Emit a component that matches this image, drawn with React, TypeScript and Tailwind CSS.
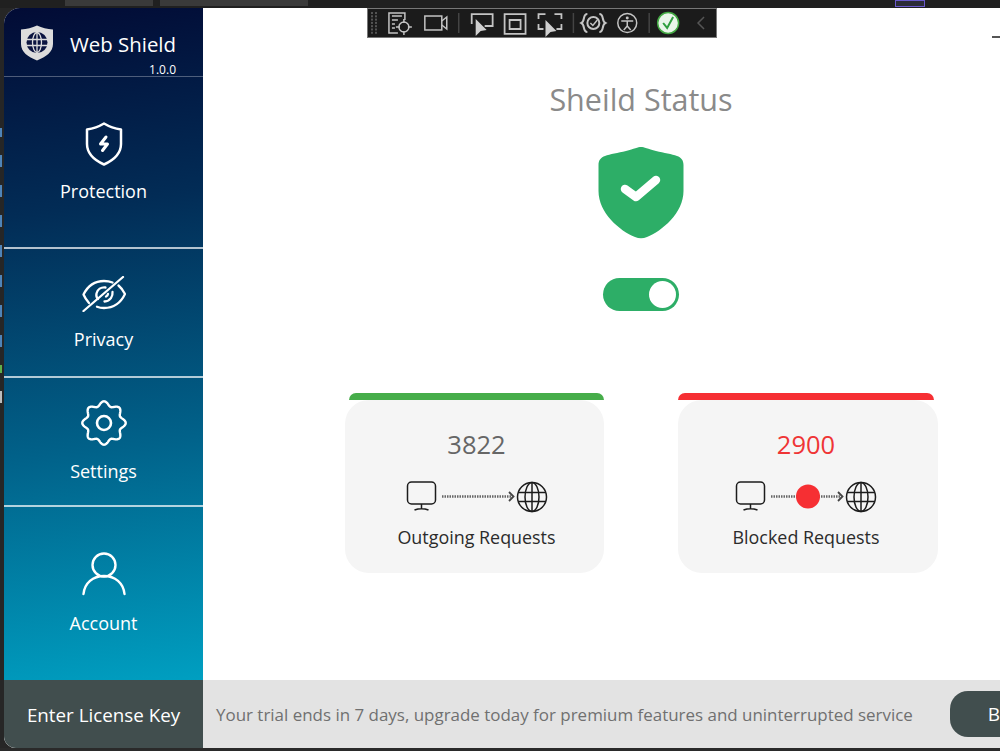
import React from 'react';

const FONT = { fontFamily: '"Open Sans", "Noto Sans", sans-serif' };

// wavy 8 lobe outline for the settings cog
const cogPath = (() => {
  const pts: string[] = [];
  for (let i = 0; i < 240; i++) {
    const a = (i / 240) * Math.PI * 2;
    const r = 19.5 + 2.2 * Math.cos(8 * a);
    pts.push(`${(24 + r * Math.sin(a)).toFixed(2)} ${(24 - r * Math.cos(a)).toFixed(2)}`);
  }
  return 'M' + pts.join('L') + 'Z';
})();

const Logo = () => (
  <svg width="34" height="36" viewBox="0 0 34 36">
    <path d="M17 .5C22 3 27 4 33 4.500V19C33 27 26 32 17 35.500C8 32 1 27 1 19V4.500C7 4 12 3 17 .5Z" fill="#dcdcdc" />
    <circle cx="17" cy="17.500" r="10.500" fill="#0b1440" />
    <g fill="none" stroke="#dcdcdc" strokeWidth="1.300">
      <ellipse cx="17" cy="17.500" rx="4.500" ry="10" />
      <path d="M7 14.500H27M7 20.500H27M17 7.500V27.500" />
    </g>
  </svg>
);

const BoltShield = () => (
  <svg width="38" height="44" viewBox="0 0 38 44" fill="none" stroke="white" strokeWidth="2.500" strokeLinejoin="round" strokeLinecap="round">
    <path d="M19 1.500C24 4.500 29 6.500 36 7.500V22C36 31 29 38 19 42.500C9 38 2 31 2 22V7.500C9 6.500 14 4.500 19 1.500Z" />
    <path d="M21 15L15.500 22H22.500L17.500 28.500" strokeWidth="3" />
  </svg>
);

const EyeOff = () => (
  <svg width="44" height="36" viewBox="0 0 44 36" fill="none" stroke="white" strokeWidth="2.300" strokeLinecap="round" strokeLinejoin="round">
    <path d="M7 27C4.500 24 2.500 21 1.500 18.500C6 9.500 13 5 22 5C25 5 28 5.500 30.500 6.500" />
    <path d="M36.500 9.500C39.500 12 41.500 15 43 18C38.500 27.500 31 32 22 32C19.500 32 17 31.500 15 30.700" />
    <path d="M16 23C14.500 21.500 14 19.500 14.500 17.500C15.500 13.500 19 11 23.500 11.500" />
    <path d="M30.500 16C31 20 28.500 25 22.500 25.500" />
    <path d="M24 20.500C25 20 25.800 19 26 18" />
    <path d="M1.500 35L41 1" />
  </svg>
);

const Cog = () => (
  <svg width="48" height="48" viewBox="0 0 48 48" fill="none" stroke="white" strokeWidth="2.400">
    <path d={cogPath} strokeLinejoin="round" />
    <circle cx="24" cy="24" r="7" strokeWidth="2.600" />
  </svg>
);

const User = () => (
  <svg width="44" height="44" viewBox="0 0 44 44" fill="none" stroke="white" strokeWidth="2.400" strokeLinecap="round">
    <circle cx="22" cy="13" r="11.500" />
    <path d="M1.500 42C2.500 31 11 24 22 24C33 24 41.500 31 42.500 42" />
  </svg>
);

const FlowGraphic = ({ blocked }: { blocked?: boolean }) => (
  <svg width="142" height="32" viewBox="0 0 142 32" fill="none">
    {/* monitor */}
    <rect x="1.500" y="1" width="28" height="22" rx="4" stroke="#1c1c1c" strokeWidth="1.500" />
    <path d="M15.500 23V28M8.500 29C12.500 27.500 18.500 27.500 22.500 29" stroke="#1c1c1c" strokeWidth="1.500" />
    {/* dotted line + arrow */}
    <path d="M36 15.500H106" stroke="#666" strokeWidth="2.400" strokeDasharray="1.500 1" />
    <path d="M103 11L107.500 15.500L103 20" stroke="#444" strokeWidth="1.800" />
    {blocked && <circle cx="73" cy="15.500" r="12" fill="#f62f33" />}
    {/* globe */}
    <circle cx="126" cy="16" r="14.500" stroke="#1c1c1c" strokeWidth="1.500" />
    <ellipse cx="126" cy="16" rx="7" ry="14.500" stroke="#1c1c1c" strokeWidth="1.500" />
    <path d="M126 1.500V30.500M112 11.500H140M112 20.500H140" stroke="#1c1c1c" strokeWidth="1.500" />
  </svg>
);

const NavItem = ({ icon, label, className }: { icon: React.ReactNode; label: string; className: string }) => (
  <div className={`flex flex-col items-center text-white ${className}`}>
    {icon}
    <span className="text-[18px] leading-6">{label}</span>
  </div>
);

const StatCard = ({ value, label, blocked }: { value: string; label: string; blocked?: boolean }) => (
  <div className={blocked ? 'w-[260px] flex flex-col' : 'w-[259px] flex flex-col'}>
    <div className={blocked ? 'h-[7px] w-[256px] rounded-t-[8px] bg-[#f62f33]' : 'h-[7px] w-[255px] ml-[4px] rounded-t-[8px] bg-[#46ad4a]'} />
    <div className={blocked ? 'h-[173px] rounded-[24px] bg-[#f5f5f5] flex flex-col items-center pt-[28px] pr-[4px]' : 'h-[173px] rounded-[24px] bg-[#f5f5f5] flex flex-col items-center pt-[28px] pl-[4px]'}>
      <span className={blocked ? 'text-[25.500px] leading-8 text-[#ef3535]' : 'text-[25.500px] leading-8 text-[#666666]'}>{value}</span>
      <div className="mt-[21px]">
        <FlowGraphic blocked={blocked} />
      </div>
      <span className="mt-[12px] text-[17.900px] leading-6 text-[#2b2b2b]">{label}</span>
    </div>
  </div>
);

const Toolbar = () => (
  <div className="absolute left-[363px] top-0 w-[350px] h-[30px] bg-[#1b1b1b] border border-[#777777] flex items-center">
    <svg width="348" height="28" viewBox="0 0 349 28" fill="none" stroke="#c4c4c4" strokeWidth="1.500">
      <g fill="#555" stroke="none">
        {[0, 1, 2, 3, 4, 5, 6].map((i) => (
          <React.Fragment key={i}>
            <rect x="3" y={3 + i * 3.300} width="2" height="2" />
            <rect x="7" y={3 + i * 3.300} width="2" height="2" />
          </React.Fragment>
        ))}
      </g>
      {/* doc + target */}
      <path d="M30 24H21V4H37V11M24 7H34M24 11H30M24 15H27M24 19H27" />
      <circle cx="36" cy="18" r="5" />
      <path d="M36 10V14M36 22V26M28 18H32M40 18H44" />
      {/* video */}
      <rect x="57" y="7" width="17" height="14" />
      <path d="M74 12L79 8V20L74 16" />
      <path d="M91 4V24" stroke="#444" />
      {/* selection cursor */}
      <path d="M104 15V5H125V17H117" strokeWidth="1.800" />
      <path d="M108 10L108 27L113 22L119 21Z" fill="#d0d0d0" stroke="none" />
      <path d="M137 5H158V25H137Z" strokeWidth="1.800" />
      <path d="M142 11H153V20H142Z" strokeWidth="1.800" />
      {/* dashed selection */}
      <path d="M171 10V5H178M187 5H194V10M171 15V20H176M194 15V20H189" strokeWidth="1.800" />
      <path d="M178 11L178 28L183 23L189 22Z" fill="#d0d0d0" stroke="none" />
      <path d="M206 4V24" stroke="#444" />
      {/* braces check */}
      <path d="M220 5C215 5 218 12 214 14C218 16 215 23 220 23M232 5C237 5 234 12 238 14C234 16 237 23 232 23" strokeWidth="2" />
      <circle cx="226" cy="14" r="6" strokeWidth="2" />
      <path d="M223 14L225.500 16.500L230 11" />
      {/* accessibility */}
      <circle cx="260" cy="14" r="9.500" />
      <circle cx="260" cy="9" r="1.500" fill="#c4c4c4" stroke="none" />
      <path d="M254 12H266M260 12V17M260 17L256.500 21M260 17L263.500 21" />
      <path d="M282 4V24" stroke="#444" />
      {/* check */}
      <circle cx="301" cy="14" r="10.500" fill="#eaf5ea" stroke="#44a944" strokeWidth="1.500" />
      <path d="M296 14L300 19L306 8" stroke="#2f9e3f" strokeWidth="2" />
      <path d="M337 8L331 14L337 20" stroke="#555" />
    </svg>
  </div>
);

export default function App() {
  return (
    <div className="w-[1000px] h-[751px] overflow-hidden bg-[#262626] flex flex-col" style={FONT}>
      {/* host window strip on top */}
      <div className="h-[8px] shrink-0 bg-[#202020] flex items-start">
        <div className="ml-[65px] w-[88px] h-[6px] bg-[#3a3a3a]" />
        <div className="ml-[7px] w-[148px] h-[6px] bg-[#3a3a3a]" />
        <div className="ml-[587px] w-[30px] h-[7px] border border-[#6a5acd] bg-[#2c2c38]" />
      </div>

      <div className="flex flex-1 min-h-0">
        <div className="w-[4px] shrink-0 flex flex-col items-start gap-[18px] pt-[120px]">
          <div className="w-[2px] h-[9px] bg-[#4f84b8]" />
          <div className="w-[2px] h-[12px] bg-[#4f84b8]" />
          <div className="w-[2px] h-[12px] bg-[#4f84b8]" />
          <div className="w-[2px] h-[12px] bg-[#4f84b8]" />
          <div className="w-[2px] h-[12px] bg-[#4f84b8]" />
          <div className="w-[2px] h-[12px] bg-[#4f84b8]" />
          <div className="w-[2px] h-[12px] bg-[#4f84b8]" />
          <div className="w-[2px] h-[12px] bg-[#4f84b8]" />
          <div className="w-[2px] h-[8px] bg-[#5fb04a]" />
          <div className="w-[2px] h-[12px] bg-[#bdbdbd]" />
        </div>

        {/* app window, runs past the right edge of the shot */}
        <div className="relative w-[1075px] shrink-0 h-[740px] bg-white rounded-tl-[16px] rounded-bl-[12px] overflow-hidden flex flex-col">
          <Toolbar />
          <div className="flex-1 flex min-h-0">
            <aside className="w-[199px] shrink-0 flex flex-col bg-[linear-gradient(172deg,#020b35_0%,#022c56_30%,#01628a_65%,#009fc1_100%)]">
              <div className="h-[69px] shrink-0 border-b border-white/30 flex items-start pl-[16px] pt-[17px] text-white">
                <Logo />
                <div className="ml-[16px] w-[106px] flex flex-col items-end">
                  <span className="text-[20.400px] leading-[24px] mt-[7px] whitespace-nowrap">Web Shield</span>
                  <span className="text-[12px] leading-3 mt-[8px]">1.0.0</span>
                </div>
              </div>
              <NavItem icon={<BoltShield />} label="Protection" className="h-[172px] shrink-0 pt-[45px] gap-[13px] border-b-2 border-white/70" />
              <NavItem icon={<EyeOff />} label="Privacy" className="h-[129px] shrink-0 pt-[27px] gap-[15px] border-b-2 border-white/70" />
              <NavItem icon={<Cog />} label="Settings" className="h-[129px] shrink-0 pt-[21px] gap-[12px] border-b-2 border-white/70" />
              <NavItem icon={<User />} label="Account" className="flex-1 pt-[45px] gap-[15px]" />
            </aside>

            <main className="flex-1 relative flex flex-col items-center pt-[71px]">
              <div className="absolute right-[79px] top-[28px] w-[8px] h-[2px] bg-[#555]" />
              <h1 className="text-[30.500px] leading-10 text-[#8a8a8a]">Sheild Status</h1>
              <svg className="mt-[28px]" width="86" height="92" viewBox="0 0 86 92">
                <path d="M43 0C46 0 50 2 58 4C66 6 74 7 79 9C83 10.500 85.500 13 85.500 18V44C85.500 66 64 84 49 90C45 91.800 41 91.800 37 90C22 84 .5 66 .5 44V18C.5 13 3 10.500 7 9C12 7 20 6 28 4C36 2 40 0 43 0Z" fill="#2dae67" />
                <path d="M27 42L38 50L58 33" fill="none" stroke="white" strokeWidth="8.500" strokeLinecap="round" strokeLinejoin="round" />
              </svg>
              <div className="mt-[39px] w-[76px] h-[33px] rounded-full bg-[#2dae67] flex items-center justify-end pr-[3px]">
                <div className="w-[27px] h-[27px] rounded-full bg-white" />
              </div>
              <div className="mt-[82px] ml-[1px] flex gap-[74px]">
                <StatCard value="3822" label="Outgoing Requests" />
                <StatCard value="2900" label="Blocked Requests" blocked />
              </div>
            </main>
          </div>

          <div className="h-[68px] shrink-0 flex bg-[#e3e3e3]">
            <div className="w-[199px] shrink-0 bg-[#414e4e] text-white text-[18.800px] pt-[2px] flex items-center justify-center whitespace-nowrap">Enter License Key</div>
            <div className="flex-1 flex items-center pl-[13px]">
              <span className="text-[16.950px] pt-[2px] text-[#707070] whitespace-nowrap">Your trial ends in 7 days, upgrade today for premium features and uninterrupted service</span>
              <button className="ml-[37px] h-[46px] w-[129px] rounded-[18px] bg-[#414e4e] text-white text-[19px] text-left pl-[38px] whitespace-nowrap">Buy Now</button>
            </div>
          </div>
        </div>
      </div>
      <div className="h-[3px] shrink-0 bg-[#2a2a2a]" />
    </div>
  );
}
